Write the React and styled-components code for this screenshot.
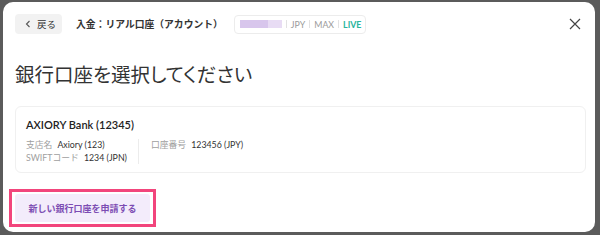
import React from "react";
import styled, { createGlobalStyle } from "styled-components";

const Global = createGlobalStyle`
  html, body { margin: 0; padding: 0; }
  body {
    width: 600px; height: 235px; overflow: hidden;
    background: #5b5b5b;
    font-family: Lato, "Noto Sans CJK JP", sans-serif;
    color: #333;
  }
`;

const Stage = styled.div`
  width: 600px;
  height: 235px;
  padding: 2px 5px 3px 3px;
  box-sizing: border-box;
`;

const Modal = styled.div`
  background: #fff;
  border-radius: 10px;
  height: 230px;
  padding: 12px 12px 0 12px;
  box-sizing: border-box;
  display: flex;
  flex-direction: column;
`;

const Header = styled.div`
  display: flex;
  align-items: center;
  height: 20px;
`;

const BackButton = styled.button`
  display: flex;
  align-items: center;
  gap: 6px;
  height: 20px;
  width: 47px;
  flex-shrink: 0;
  padding: 0 0 0 10px;
  border: none;
  border-radius: 4px;
  background: #f2f2f2;
  color: #333;
  font-family: inherit;
  font-size: 9.5px;
  cursor: pointer;
`;

const Title = styled.div`
  margin-left: 14px;
  font-size: 9.8px;
  font-weight: 600;
  color: #333;
  white-space: nowrap;
`;

const Badge = styled.div`
  margin-left: 11px;
  height: 19px;
  width: 132px;
  flex-shrink: 0;
  box-sizing: border-box;
  border: 1px solid #ececec;
  border-radius: 4px;
  display: flex;
  align-items: center;
  padding-left: 5px;
  font-size: 8.8px;
  color: #9a9a9a;
`;

const Bar = styled.div`
  display: flex;
  width: 42px;
  height: 8px;
`;

const BarPart = styled.div`
  width: ${(p) => p.$w}px;
  background: ${(p) => p.$c};
`;

const Sep = styled.span`
  width: 1px;
  height: 8px;
  background: #e2e2e2;
  margin: 0 4px;
`;

const Live = styled.span`
  color: #2ab59c;
  font-weight: 700;
`;

const Close = styled.div`
  margin-left: auto;
  margin-right: 2px;
  width: 12px;
  height: 12px;
  display: flex;
`;

const Heading = styled.h1`
  margin: 29px 0 0 0;
  font-size: 19.5px;
  font-weight: 400;
  color: #333;
  line-height: 24px;
  font-feature-settings: "palt";
`;

const Card = styled.div`
  margin-top: 19px;
  border: 1px solid #f0f0f0;
  border-radius: 6px;
  height: 67px;
  box-sizing: border-box;
  padding: 11px 10px 0 10px;
  margin-right: -3px;
`;

const BankName = styled.div`
  font-size: 11px;
  font-weight: 600;
  color: #222;
  line-height: 14px;
`;

const Details = styled.div`
  display: flex;
  margin-top: 7px;
`;

const Col = styled.div`
  display: flex;
  flex-direction: column;
  gap: 1px;
  padding-right: ${(p) => (p.$first ? "11px" : "0")};
  padding-left: ${(p) => (p.$first ? "0" : "12px")};
  border-left: ${(p) => (p.$first ? "none" : "1px solid #ececec")};
`;

const Row = styled.div`
  font-size: 8.8px;
  line-height: 12px;
  display: flex;
  gap: 5px;
`;

const Label = styled.span`
  color: #a0a0a0;
`;

const Value = styled.span`
  color: #333;
`;

const Highlight = styled.div`
  margin-top: 16px;
  margin-left: -6px;
  width: 147px;
  height: 38px;
  box-sizing: border-box;
  border: 3px solid #f2457c;
  padding: 2px 3px;
  display: flex;
`;

const NewButton = styled.button`
  flex: 1;
  border: none;
  border-radius: 3px;
  background: #f3ecfb;
  color: #7c4cb3;
  font-family: inherit;
  font-size: 9px;
  font-weight: 600;
  cursor: pointer;
`;

export default function App() {
  return (
    <>
      <Global />
      <Stage>
        <Modal>
          <Header>
            <BackButton>
              <svg width="6" height="8" viewBox="0 0 6 8">
                <path d="M4.5 1 L1.5 4 L4.5 7" fill="none" stroke="#555" strokeWidth="1.1" />
              </svg>
              戻る
            </BackButton>
            <Title>入金：リアル口座（アカウント）</Title>
            <Badge>
              <Bar>
                <BarPart $w={28} $c="#d8c6ec" />
                <BarPart $w={14} $c="#e8dcf4" />
              </Bar>
              <Sep />
              JPY
              <Sep />
              MAX
              <Sep />
              <Live>LIVE</Live>
            </Badge>
            <Close>
              <svg width="12" height="12" viewBox="0 0 12 12">
                <path d="M1 1 L11 11 M11 1 L1 11" stroke="#444" strokeWidth="1.2" />
              </svg>
            </Close>
          </Header>
          <Heading>銀行口座を選択してください</Heading>
          <Card>
            <BankName>AXIORY Bank (12345)</BankName>
            <Details>
              <Col $first>
                <Row>
                  <Label>支店名</Label>
                  <Value>Axiory (123)</Value>
                </Row>
                <Row>
                  <Label>SWIFTコード</Label>
                  <Value>1234 (JPN)</Value>
                </Row>
              </Col>
              <Col>
                <Row>
                  <Label>口座番号</Label>
                  <Value>123456 (JPY)</Value>
                </Row>
              </Col>
            </Details>
          </Card>
          <Highlight>
            <NewButton>新しい銀行口座を申請する</NewButton>
          </Highlight>
        </Modal>
      </Stage>
    </>
  );
}
